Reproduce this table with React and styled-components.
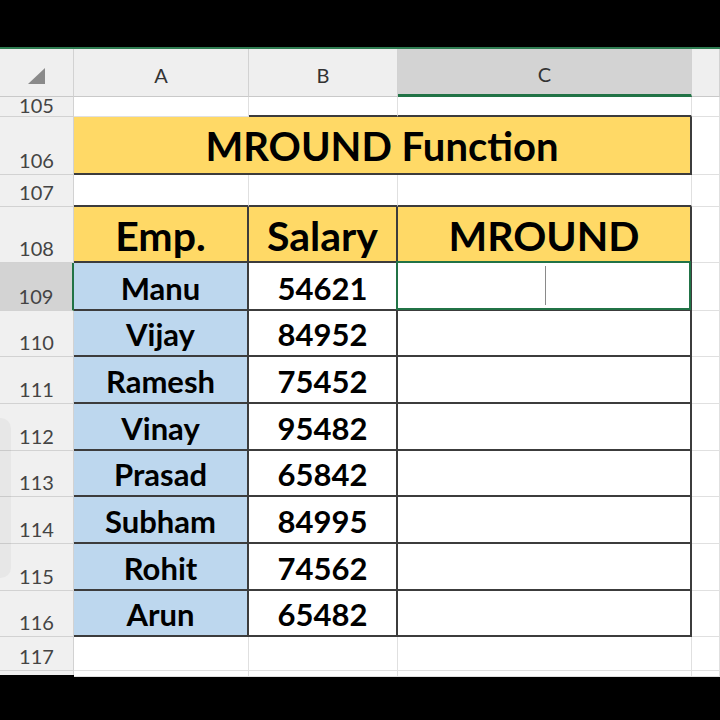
import React from 'react'
import styled, { createGlobalStyle } from 'styled-components'

const GlobalStyle = createGlobalStyle`
  html, body {
    margin: 0;
    padding: 0;
    background: #000;
  }
  * { box-sizing: border-box; }
`

const GREEN = '#217346'
const DARK = '#3c3c3c'
const GRID = '#e0e0e0'
const HEAD_LINE = '#d2d2d2'
const COLS = '74px 175px 149px 294px 28px'

const Page = styled.div`
  position: relative;
  width: 720px;
  height: 720px;
  display: flex;
  flex-direction: column;
  background: #000;
  overflow: hidden;
  font-family: Lato, "Liberation Sans", sans-serif;
`
const TopBar = styled.div`
  height: 47px;
  background: #000;
  border-bottom: 2px solid #2f7d52;
  flex: none;
  box-sizing: content-box;
`
const Sheet = styled.div`
  display: flex;
  flex-direction: column;
  background: #fff;
  flex: none;
`
const BottomBar = styled.div`
  flex: 1;
  background: #000;
`
const Row = styled.div`
  display: grid;
  grid-template-columns: ${COLS};
  height: ${p => p.$h}px;
`
const ColHead = styled.div`
  display: flex;
  align-items: center;
  justify-content: center;
  padding-top: 4px;
  background: ${p => (p.$active ? '#d3d3d3' : '#efefef')};
  border-right: 1px solid ${HEAD_LINE};
  border-bottom: ${p => (p.$active ? `3px solid ${GREEN}` : `1px solid #c9c9c9`)};
  font-size: 20px;
  color: #333;
`
const Corner = styled(ColHead)`
  padding: 0 0 12px 28px;
  justify-content: flex-start;
  align-items: flex-end;
`
const RowHead = styled.div`
  display: flex;
  align-items: flex-end;
  justify-content: center;
  overflow: hidden;
  background: ${p => (p.$active ? '#d3d3d3' : '#f0f0f0')};
  border-right: ${p => (p.$active ? `2px solid ${GREEN}` : `1px solid ${HEAD_LINE}`)};
  border-bottom: 1px solid ${HEAD_LINE};
  font-size: 20px;
  line-height: 1;
  color: #444;
  padding-bottom: ${p => p.$pb ?? 4}px;
`
const Cell = styled.div`
  position: relative;
  display: flex;
  align-items: flex-end;
  justify-content: center;
  grid-column: ${p => (p.$span ? `span ${p.$span}` : 'auto')};
  background: ${p => p.$fill || '#fff'};
  border-right: ${p => (p.$r ? `2px solid ${DARK}` : `1px solid ${GRID}`)};
  border-bottom: ${p => (p.$b ? `2px solid ${DARK}` : `1px solid ${GRID}`)};
  font-weight: 700;
  font-size: ${p => p.$size || 31}px;
  line-height: 1;
  color: #000;
  padding-bottom: ${p => p.$pb ?? 5}px;
  white-space: nowrap;
`
const Selection = styled.div`
  position: absolute;
  top: -2px;
  left: -2px;
  right: -1px;
  bottom: -1px;
  border: 2px solid ${GREEN};
  pointer-events: none;
`
const Caret = styled.div`
  position: absolute;
  left: 147px;
  top: 3px;
  bottom: 3px;
  width: 1px;
  background: #8a8a8a;
`
const Ghost = styled.div`
  position: absolute;
  left: 0;
  top: 418px;
  width: 11px;
  height: 160px;
  border-radius: 0 10px 10px 0;
  background: rgba(0, 0, 0, 0.035);
`

const YELLOW = '#ffd966'
const BLUE = '#bdd7ee'

const data = [
  ['109', 'Manu', '54621', 48],
  ['110', 'Vijay', '84952', 46],
  ['111', 'Ramesh', '75452', 47],
  ['112', 'Vinay', '95482', 47],
  ['113', 'Prasad', '65842', 46],
  ['114', 'Subham', '84995', 47],
  ['115', 'Rohit', '74562', 47],
  ['116', 'Arun', '65482', 46],
]

const App = () => {
  return (
    <Page>
      <GlobalStyle />
      <TopBar />
      <Sheet>
        <Row $h={48}>
          <Corner>
            <svg width="17" height="16" viewBox="0 0 17 16">
              <polygon points="17,0 17,16 0,16" fill="#8a8a8a" />
            </svg>
          </Corner>
          <ColHead>A</ColHead>
          <ColHead>B</ColHead>
          <ColHead $active>C</ColHead>
          <ColHead />
        </Row>

        <Row $h={20}>
          <RowHead $pb={1}>105</RowHead>
          <Cell />
          <Cell $b />
          <Cell $b />
          <Cell />
        </Row>

        <Row $h={58}>
          <RowHead>106</RowHead>
          <Cell $span={3} $fill={YELLOW} $r $b $size={40} $pb={7}>
            MROUND Function
          </Cell>
          <Cell />
        </Row>

        <Row $h={32}>
          <RowHead>107</RowHead>
          <Cell $b />
          <Cell $b />
          <Cell $b />
          <Cell />
        </Row>

        <Row $h={56}>
          <RowHead>108</RowHead>
          <Cell $fill={YELLOW} $r $b $size={41} $pb={5}>Emp.</Cell>
          <Cell $fill={YELLOW} $r $b $size={41} $pb={5}>Salary</Cell>
          <Cell $fill={YELLOW} $r $b $size={41} $pb={5}>MROUND</Cell>
          <Cell />
        </Row>

        {data.map(([num, name, salary, h], i) => (
          <Row key={num} $h={h}>
            <RowHead $active={i === 0}>{num}</RowHead>
            <Cell $fill={BLUE} $r $b>{name}</Cell>
            <Cell $r $b>{salary}</Cell>
            <Cell $r $b>
              {i === 0 && (
                <Selection>
                  <Caret />
                </Selection>
              )}
            </Cell>
            <Cell />
          </Row>
        ))}

        <Row $h={34}>
          <RowHead>117</RowHead>
          <Cell />
          <Cell />
          <Cell />
          <Cell />
        </Row>
        <Row $h={4}>
          <RowHead />
          <Cell />
          <Cell />
          <Cell />
          <Cell />
        </Row>
      </Sheet>
      <BottomBar />
      <Ghost />
    </Page>
  )
}

export default App
